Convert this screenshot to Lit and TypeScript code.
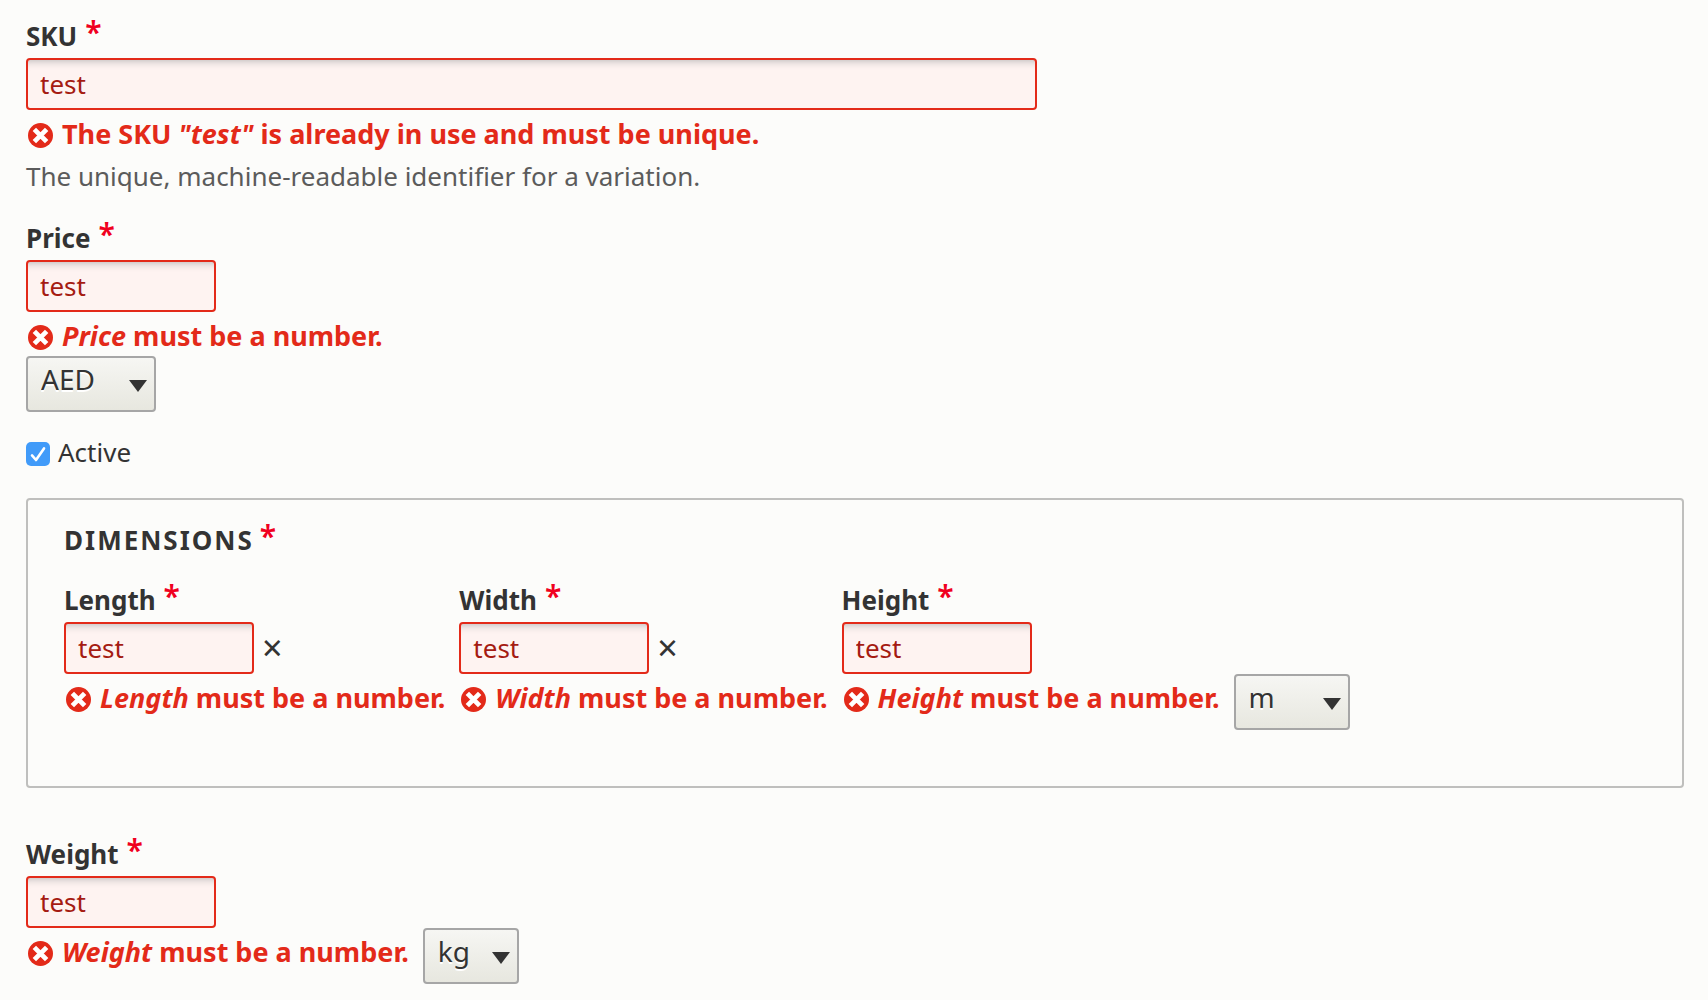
import { LitElement, html, svg, css, nothing } from "lit";
import { customElement, property } from "lit/decorators.js";
import { classMap } from "lit/directives/class-map.js";

const errorIcon = html`<svg class="error-icon" viewBox="0 0 26 26" aria-hidden="true">
  ${svg`<circle cx="13" cy="13" r="13" fill="#e32a19" />
  <path d="M6.6 6.6 19.4 19.4M19.4 6.6 6.6 19.4" stroke="#fff" stroke-width="5" fill="none" />`}
</svg>`;

const star = html`<span class="star" aria-hidden="true">*</span>`;

@customElement("app-root")
export class AppRoot extends LitElement {
  @property() value = "test";

  static styles = css`
    :host {
      display: block;
      box-sizing: border-box;
      min-height: 100vh;
      padding: 20px 24px 14px 26px;
      background: #fcfcfa;
      color: #333;
      font-family: "Noto Sans", "Open Sans", sans-serif;
      font-size: 26px;
      line-height: 32px;
    }
    .label {
      display: flex;
      gap: 8px;
      padding-bottom: 6px;
      font-weight: 700;
    }
    .star {
      color: #f00020;
      font-weight: 600;
      font-size: 30px;
      line-height: 24px;
      height: 24px;
      letter-spacing: 0;
    }
    .text {
      box-sizing: border-box;
      display: block;
      width: 190px;
      height: 52px;
      margin: 0;
      padding: 0 12px;
      border: 2px solid #e32a19;
      border-radius: 4px;
      background: #fef3f1;
      box-shadow: inset 0 10px 10px -10px #aaa;
      color: #a51b12;
      font: inherit;
    }
    .text.wide {
      width: 61%;
    }
    .error {
      display: flex;
      align-items: flex-start;
      gap: 9px;
      padding: 8px 0 0 2px;
      color: #e32a19;
      font-weight: 700;
      font-size: 27px;
      white-space: nowrap;
    }
    .error-icon {
      flex: none;
      width: 25px;
      height: 25px;
      margin-top: 5px;
    }
    .description {
      margin: 10px 0 30px;
      color: #5b5b5b;
    }
    .picker {
      display: inline-grid;
      align-items: center;
      justify-items: end;
    }
    .picker > * {
      grid-area: 1 / 1;
    }
    .select {
      appearance: none;
      box-sizing: border-box;
      width: 100%;
      height: 56px;
      margin: 0;
      padding: 0 32px 10px 13px;
      border: 2px solid #a6a6a6;
      border-radius: 4px;
      background: linear-gradient(#f6f6f3, #e7e7df);
      color: #333;
      font: inherit;
      font-size: 28px;
      line-height: 40px;
      text-shadow: 0 2px #fff;
    }
    .arrow {
      width: 18px;
      height: 12px;
      margin-right: 9px;
      margin-top: 4px;
      pointer-events: none;
    }
    .currency {
      width: 130px;
      margin-top: 4px;
    }
    .length-unit {
      grid-area: 3 / 4;
      width: 116px;
    }
    .weight-unit {
      width: 96px;
    }
    .active {
      display: flex;
      align-items: center;
      gap: 8px;
      margin: 24px 0 30px;
    }
    .tick {
      display: grid;
      margin-top: 4px;
    }
    .tick > * {
      grid-area: 1 / 1;
      width: 24px;
      height: 24px;
    }
    .box {
      appearance: none;
      margin: 0;
      border-radius: 5px;
      background: #f2f2f2;
      border: 1px solid #aaa;
    }
    .box:checked {
      border: 0;
      background: #419bf9;
    }
    .check {
      display: none;
      pointer-events: none;
    }
    .box:checked + .check {
      display: block;
    }
    .group {
      display: flow-root;
      min-width: 0;
      margin: 0 0 50px;
      padding: 24px 36px 56px;
      border: 2px solid #bfbfbd;
      border-radius: 4px;
    }
    .legend {
      float: left;
      display: flex;
      gap: 6px;
      width: 100%;
      padding: 0;
      margin-bottom: 28px;
      font-weight: 700;
      letter-spacing: 2px;
      text-transform: uppercase;
    }
    .row {
      clear: both;
      display: grid;
      grid-template-columns: repeat(4, max-content);
      grid-template-rows: auto auto auto;
      column-gap: 14px;
    }
    .dimension {
      display: grid;
      grid-row: 1 / span 3;
      grid-template-rows: subgrid;
    }
    .control {
      display: flex;
      align-items: center;
      gap: 8px;
    }
    .times {
      font-size: 36px;
    }
    .weight {
      display: flex;
      align-items: flex-start;
      gap: 14px;
    }
  `;

  private label(id: string, text: string) {
    return html`<label class="label" for=${id}>${text}${star}</label>`;
  }

  private input(id: string, wide = false) {
    return html`<input
      class=${classMap({ text: true, wide })}
      id=${id}
      type="text"
      required
      aria-invalid="true"
      aria-describedby="${id}-error"
      .value=${this.value}
    />`;
  }

  private numberError(id: string, name: string) {
    return html`<div class="error" id="${id}-error">
      ${errorIcon}<span><em>${name}</em> must be a number.</span>
    </div>`;
  }

  private picker(label: string, value: string, kind: string) {
    return html`<span class="picker ${kind}">
      <select class="select" aria-label=${label}>
        <option>${value}</option>
      </select>
      <svg class="arrow" viewBox="0 0 18 12" aria-hidden="true">
        ${svg`<path d="M0 0H18L9 12Z" fill="#333" />`}
      </svg>
    </span>`;
  }

  private dimension(id: string, name: string, times: boolean) {
    return html`<div class="dimension">
      ${this.label(id, name)}
      <div class="control">${this.input(id)}${times ? html`<span class="times">×</span>` : nothing}</div>
      ${this.numberError(id, name)}
    </div>`;
  }

  render() {
    return html`
      ${this.label("sku", "SKU")} ${this.input("sku", true)}
      <div class="error" id="sku-error">
        ${errorIcon}<span>The SKU <em>"test"</em> is already in use and must be unique.</span>
      </div>
      <p class="description">The unique, machine-readable identifier for a variation.</p>

      ${this.label("price", "Price")} ${this.input("price")} ${this.numberError("price", "Price")}
      ${this.picker("Currency", "AED", "currency")}

      <div class="active">
        <span class="tick">
          <input class="box" id="active" type="checkbox" checked />
          <svg class="check" viewBox="0 0 24 24" aria-hidden="true">
            ${svg`<path d="M6 13.4 10 18 18 6.4" fill="none" stroke="#fff" stroke-width="2.6" stroke-linecap="round" stroke-linejoin="round" />`}
          </svg>
        </span>
        <label for="active">Active</label>
      </div>

      <fieldset class="group">
        <legend class="legend">Dimensions${star}</legend>
        <div class="row">
          ${this.dimension("length", "Length", true)} ${this.dimension("width", "Width", true)}
          ${this.dimension("height", "Height", false)}
          ${this.picker("Dimension unit", "m", "length-unit")}
        </div>
      </fieldset>

      ${this.label("weight", "Weight")} ${this.input("weight")}
      <div class="weight">
        ${this.numberError("weight", "Weight")} ${this.picker("Weight unit", "kg", "weight-unit")}
      </div>
    `;
  }
}
